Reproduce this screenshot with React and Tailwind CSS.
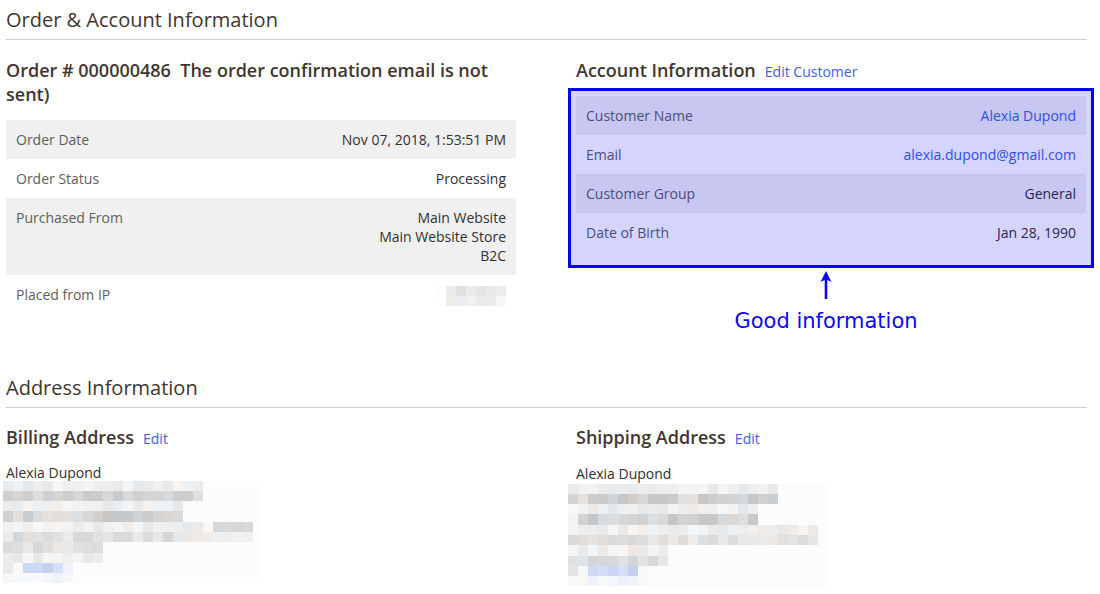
import React from "react";

function rng(seed) {
  let s = seed >>> 0;
  return () => {
    s = (s * 1664525 + 1013904223) >>> 0;
    return s / 4294967296;
  };
}

function cellColor(kind, r) {
  const v = r();
  const tint = r();
  let base;
  if (kind === "light") base = 232 + Math.floor(v * 16);
  else if (kind === "dark") base = 198 + Math.floor(v * 28);
  else if (kind === "mid") base = 214 + Math.floor(v * 22);
  else if (kind === "faint") base = 244 + Math.floor(v * 8);
  else base = 240;
  let R = base, G = base, B = base;
  if (tint < 0.3) { R += 3; B -= 3; }
  else if (tint > 0.75) { R -= 3; B += 3; }
  if (kind === "blue") { R = 190 + Math.floor(v * 25); G = 205 + Math.floor(v * 20); B = 240 + Math.floor(v * 10); }
  if (kind === "faintblue") { R = 236 + Math.floor(v * 12); G = 240 + Math.floor(v * 10); B = 250; }
  return `rgb(${R},${G},${B})`;
}

function Mosaic({ rows, width, seed }) {
  const r = rng(seed);
  return (
    <div className="bg-[#fcfcfc] flex flex-col" style={{ width }}>
      {rows.map((row, i) => (
        <div key={i} className="flex h-[10.3px]">
          {row.map((kind, j) => (
            <div key={j} className="w-[10px] h-full" style={{ background: kind ? cellColor(kind, r) : "transparent" }} />
          ))}
        </div>
      ))}
    </div>
  );
}

const rep = (k, n) => Array(n).fill(k);

const billingRows = [
  rep("light", 20),
  rep("dark", 20),
  rep("light", 18),
  rep("dark", 18),
  [...rep("light", 21), ...rep("mid", 4)],
  [...rep("mid", 21), ...rep("light", 4)],
  rep("mid", 10),
  rep("light", 10),
  ["mid", "faint", "blue", "blue", "blue", "blue", "faintblue"],
  ["faint", "faint", "faintblue", "faintblue", "faintblue", "faintblue", "faint"],
];

const shippingRows = [
  rep("light", 21),
  rep("dark", 21),
  rep("light", 19),
  ["light", ...rep("dark", 18)],
  rep("light", 25),
  rep("mid", 25),
  rep("light", 10),
  rep("mid", 10),
  ["mid", "faint", "blue", "blue", "blue", "blue", "blue", "faintblue"],
  ["faint", "faint", "faintblue", "faintblue", "faintblue", "faintblue", "faintblue", "faint"],
];

function SectionTitle({ children }) {
  return (
    <h2 className="text-[20px] font-normal leading-[26px] text-[#41362f] pb-[6px] border-b border-[#cccccc]">
      {children}
    </h2>
  );
}

function Row({ label, children, odd }) {
  return (
    <div className={`flex justify-between px-[10px] py-[10px] leading-[19px] text-[14px] ${odd ? "bg-[#f0f0f0]" : ""}`}>
      <div className="text-[#5e5e5e]">{label}</div>
      <div className="text-[#303030] text-right">{children}</div>
    </div>
  );
}

export default function App() {
  return (
    <div className="w-[1100px] h-[594px] overflow-hidden bg-white font-['Open_Sans',sans-serif] pl-[6px] pr-[13px] pt-[7px]">
      <SectionTitle>Order &amp; Account Information</SectionTitle>

      <div className="grid grid-cols-[510px_510px] gap-x-[60px] mt-[17.5px]">
        <div>
          <h3 className="text-[18px] leading-[24px] font-semibold text-[#41362f]">
            Order # 000000486&nbsp; The order confirmation email is not sent)
          </h3>
          <div className="mt-[14.5px]">
            <Row label="Order Date" odd>Nov 07, 2018, 1:53:51 PM</Row>
            <Row label="Order Status">Processing</Row>
            <Row label="Purchased From" odd>
              <div>Main Website</div>
              <div>Main Website Store</div>
              <div>B2C</div>
            </Row>
            <Row label="Placed from IP">
              <div className="flex flex-col py-[1px]">
                <div className="flex h-[10px]">
                  <div className="w-[10px] bg-[#fdfcfa]" />
                  <div className="w-[10px] bg-[#ebebeb]" />
                  <div className="w-[10px] bg-[#e2e0de]" />
                  <div className="w-[10px] bg-[#e9eaec]" />
                  <div className="w-[10px] bg-[#e6e5e3]" />
                  <div className="w-[10px] bg-[#e9e9eb]" />
                  <div className="w-[10px] bg-[#ececec]" />
                </div>
                <div className="flex h-[10px]">
                  <div className="w-[10px] bg-[#fefefd]" />
                  <div className="w-[10px] bg-[#eeedeb]" />
                  <div className="w-[10px] bg-[#ebecef]" />
                  <div className="w-[10px] bg-[#efefee]" />
                  <div className="w-[10px] bg-[#eceae8]" />
                  <div className="w-[10px] bg-[#ebebed]" />
                  <div className="w-[10px] bg-[#f6f6f6]" />
                </div>
              </div>
            </Row>
          </div>
        </div>

        <div>
          <div className="flex items-baseline gap-[9px]">
            <h3 className="text-[18px] leading-[24px] font-semibold text-[#41362f]">Account Information</h3>
            <span className="text-[14px] text-[#3a62e6]">Edit Customer</span>
          </div>
          <div className="relative mt-[6.5px] -mx-[8px] border-[3px] border-[#0000f5] px-[5px] pt-[5px] pb-[13px]">
            <Row label="Customer Name" odd>
              <span className="text-[#3a62e6]">Alexia Dupond</span>
            </Row>
            <Row label="Email">
              <span className="text-[#3a62e6]">alexia.dupond@gmail.com</span>
            </Row>
            <Row label="Customer Group" odd>General</Row>
            <Row label="Date of Birth">Jan 28, 1990</Row>
            <div className="absolute inset-0 bg-[#0000ff]/[0.17] pointer-events-none" />
            <div className="absolute top-full left-[255px] w-[0px] flex flex-col items-center">
              <svg width="12" height="30" viewBox="0 0 12 30" className="mt-[6px] shrink-0">
                <path d="M6 0 L11.5 11 L7.3 9 L7.3 28 L4.7 28 L4.7 9 L0.5 11 Z" fill="#0b0bea" />
              </svg>
              <div className="mt-[7px] whitespace-nowrap text-[21px] leading-[26px] text-[#0b0bea] font-['DejaVu_Sans',sans-serif]">
                Good information
              </div>
            </div>
          </div>
        </div>
      </div>

      <div className="mt-[58px]">
        <SectionTitle>Address Information</SectionTitle>
      </div>

      <div className="grid grid-cols-[510px_510px] gap-x-[60px] mt-[17px]">
        <div>
          <div className="flex items-baseline gap-[9px]">
            <h3 className="text-[18px] leading-[24px] font-semibold text-[#41362f]">Billing Address</h3>
            <span className="text-[14px] text-[#3a62e6]">Edit</span>
          </div>
          <div className="mt-[14.5px] text-[14px] leading-[17px] text-[#303030]">Alexia Dupond</div>
          <div className="-ml-[3px]">
            <Mosaic rows={billingRows} width={255} seed={7} />
          </div>
        </div>
        <div>
          <div className="flex items-baseline gap-[9px]">
            <h3 className="text-[18px] leading-[24px] font-semibold text-[#41362f]">Shipping Address</h3>
            <span className="text-[14px] text-[#3a62e6]">Edit</span>
          </div>
          <div className="mt-[14.5px] text-[14px] leading-[19px] text-[#303030]">Alexia Dupond</div>
          <div className="-ml-[8px] mt-[1px]">
            <Mosaic rows={shippingRows} width={258} seed={23} />
          </div>
        </div>
      </div>
    </div>
  );
}
